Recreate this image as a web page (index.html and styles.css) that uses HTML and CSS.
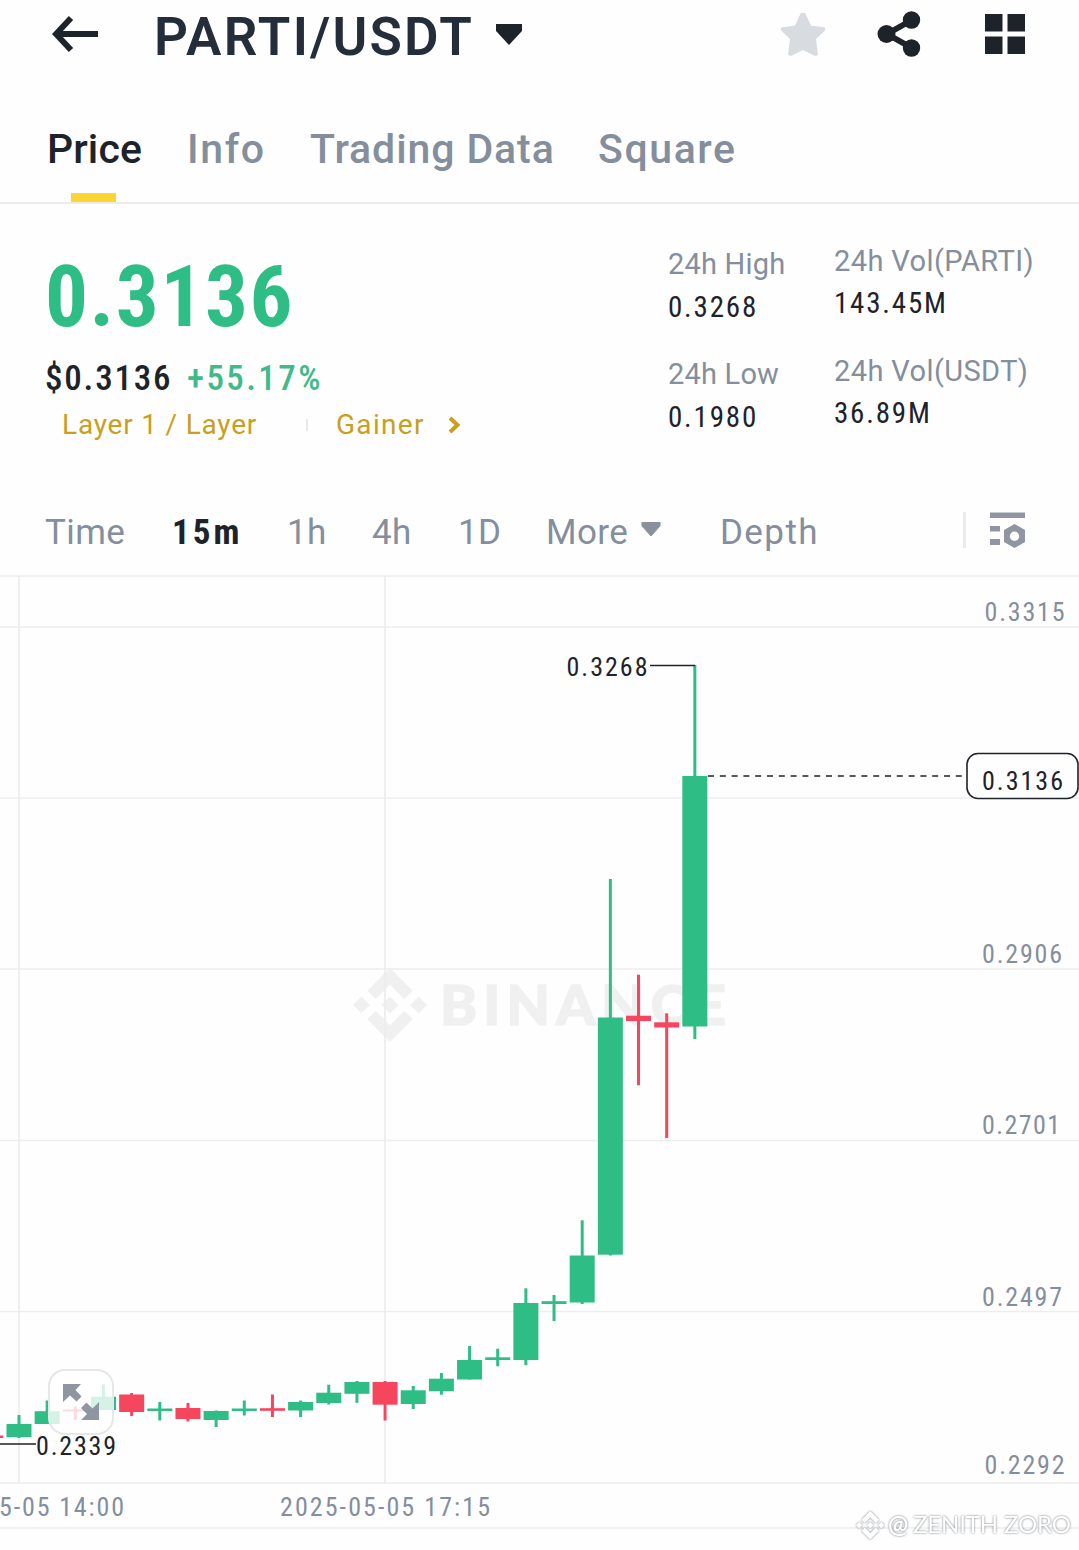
FILE: index.html
```html
<!DOCTYPE html>
<html lang="en">
<head>
    <meta charset="UTF-8">
    <meta name="viewport" content="width=device-width, initial-scale=1.0">
    <title>PARTI/USDT</title>
    <link rel="stylesheet" href="styles.css">
</head>
<body>
    <header class="header">
        <svg class="back" width="48" height="38" viewBox="0 0 48 38">
            <path d="M19 3 L4 19 L19 35 M4 19 H46" fill="none" stroke="#1e2329" stroke-width="6"/>
        </svg>
        <h1>PARTI/USDT</h1>
        <svg class="caret" width="28" height="22" viewBox="0 0 28 22">
            <path d="M1 0 H27 V7 L14 21 L1 7 Z" fill="#1e2329"/>
        </svg>
        <div class="actions">
            <svg width="46" height="46" viewBox="0 0 46 46">
                <path d="M20.8 2 H25.2 L31 14.5 L45 16.5 V19.5 L36 28 L38 44 L35 45 L23 39 L11 45 L8 44 L10 28 L1 19.5 V16.5 L15 14.5 Z" fill="#d8dce1"/>
            </svg>
            <svg width="46" height="46" viewBox="0 0 46 46">
                <path d="M35 9 L10 23 L35 37" fill="none" stroke="#1e2329" stroke-width="6"/>
                <circle cx="34.500" cy="9" r="8.7" fill="#1e2329"/>
                <circle cx="9.500" cy="23" r="9" fill="#1e2329"/>
                <circle cx="34.500" cy="37" r="8.7" fill="#1e2329"/>
            </svg>
            <svg width="40" height="40" viewBox="0 0 40 40">
                <path d="M0 0 H17.5 V17.5 H0 Z M22.5 0 H40 V17.5 H22.5 Z M0 22.5 H17.5 V40 H0 Z M22.5 22.5 H40 V40 H22.5 Z" fill="#1e2329"/>
            </svg>
        </div>
    </header>

    <nav class="tabs">
        <a class="tab active">Price</a>
        <a class="tab wide">Info</a>
        <a class="tab">Trading Data</a>
        <a class="tab wide">Square</a>
    </nav>

    <section class="summary">
        <div class="quote">
            <div class="last-price">0.3136</div>
            <div class="fiat">
                <span>$0.3136</span>
                <span class="change">+55.17%</span>
            </div>
            <div class="tags">
                <span class="tag">Layer 1 / Layer</span>
                <span class="tag-divider"></span>
                <span class="tag gainer">Gainer</span>
                <svg width="13" height="18" viewBox="0 0 13 18">
                    <path d="M2 2 L9.5 9 L2 16" fill="none" stroke="#c99f1e" stroke-width="4"/>
                </svg>
            </div>
        </div>
        <div class="stats">
            <div class="stat">
                <div class="stat-label">24h High</div>
                <div class="stat-value">0.3268</div>
            </div>
            <div class="stat">
                <div class="stat-label">24h Low</div>
                <div class="stat-value">0.1980</div>
            </div>
        </div>
        <div class="stats volume">
            <div class="stat">
                <div class="stat-label">24h Vol(PARTI)</div>
                <div class="stat-value">143.45M</div>
            </div>
            <div class="stat">
                <div class="stat-label">24h Vol(USDT)</div>
                <div class="stat-value">36.89M</div>
            </div>
        </div>
    </section>

    <div class="intervals">
        <span>Time</span>
        <span class="selected">15m</span>
        <span>1h</span>
        <span>4h</span>
        <span>1D</span>
        <span class="more">More
            <svg width="20" height="14" viewBox="0 0 20 14">
                <path d="M1 0 H19 V4 L10 14 L1 4 Z" fill="#8a919c" stroke="#8a919c"/>
            </svg>
        </span>
        <span class="depth">Depth</span>
        <svg class="settings" width="36" height="36" viewBox="0 0 36 36">
            <path d="M0 0.5 H35 V6 H0 Z M0 14 H10 V19.5 H0 Z M0 27 H10 V33 H0 Z" fill="#8f96a1"/>
            <path d="M24.5 12 L35 18 V30 L24.5 36 L14 30 V18 Z M24.5 19.5 A4.7 4.7 0 1 0 24.5 28.9 A4.7 4.7 0 1 0 24.5 19.5 Z" fill="#8f96a1" fill-rule="evenodd"/>
        </svg>
    </div>

    <main class="chart-wrap">
        <svg class="chart" width="1079" height="975" viewBox="0 575 1079 975">
            <defs>
                <g id="logo">
                    <path d="M38.73,53.2l24.59-24.58,24.6,24.6,14.3-14.31L63.32,0,24.42,38.9Z M0,63.31L14.3,49l14.31,14.31L14.31,77.61Z M38.73,73.41,63.32,98l24.6-24.6,14.31,14.29-38.9,38.91-38.91-38.88Z M98,63.31l14.31-14.31,14.3,14.31-14.31,14.31Z M77.83,63.3L63.32,48.78,48.81,63.28l14.5,14.5Z"/>
                </g>
            </defs>

            <g class="watermark">
                <use href="#logo" transform="translate(353 968) scale(0.584)"/>
                <text x="440" y="1025" textLength="286">BINANCE</text>
            </g>

            <g class="grid">
                <path d="M0 576H1079 M0 627H1079 M0 798H1079 M0 969H1079 M0 1140.500H1079 M0 1311.500H1079 M0 1483H1079 M0 1528H1079 M19 576V1483 M385 576V1483"/>
            </g>

            <g id="candles"></g>

            <g class="axis">
                <text x="984.500" y="621" textLength="80">0.3315</text>
                <text x="982" y="963" textLength="80">0.2906</text>
                <text x="982" y="1134" textLength="78">0.2701</text>
                <text x="982" y="1306" textLength="80">0.2497</text>
                <text x="984.500" y="1474" textLength="80">0.2292</text>
                <text x="-1" y="1516" textLength="125">5-05 14:00</text>
                <text x="280" y="1516" textLength="210">2025-05-05 17:15</text>
            </g>

            <g class="marks">
                <path d="M650 665.500H695 M0 1444H36"/>
                <path d="M708 776H966" stroke-dasharray="6 5.800"/>
                <rect x="967" y="753.500" width="111" height="45" rx="11"/>
                <text x="566.500" y="676" textLength="81">0.3268</text>
                <text x="982" y="790" textLength="81">0.3136</text>
                <text x="36" y="1455" textLength="80">0.2339</text>
            </g>

            <g class="signature">
                <use href="#logo" transform="translate(856 1511) scale(0.225)"/>
                <text class="at" x="888" y="1533" textLength="22">@</text>
                <text x="913" y="1533" textLength="158">ZENITH ZORO</text>
            </g>
        </svg>
        <button class="expand">
            <svg width="38" height="38" viewBox="0 0 38 38">
                <path d="M1 1 H19 L13.500 7 L19.500 13.500 L14.500 18.500 L8 12.500 L1 19 Z M37 37 H19 L25 31 L19 25 L24.500 19.500 L30.500 25.500 L37 19 Z" fill="#8f96a1"/>
            </svg>
        </button>
    </main>

    <script>
        // [body top, body bottom, wick top, wick bottom, direction]
        const candles = [
            [1435.5, 1438, 1435.5, 1438, 'down'],
            [1424, 1437.2, 1415, 1438, 'up'],
            [1411.2, 1424, 1400.5, 1424, 'up'],
            [1409.5, 1411.5, 1406.5, 1420, 'down'],
            [1396.7, 1410, 1384.5, 1410, 'up'],
            [1394.5, 1412, 1393, 1416, 'down'],
            [1408.5, 1411, 1402, 1420.5, 'up'],
            [1408, 1419, 1403, 1421.5, 'down'],
            [1411, 1420, 1410.5, 1427, 'up'],
            [1408.5, 1411, 1400.5, 1415.5, 'up'],
            [1408.2, 1410.8, 1394.5, 1417, 'down'],
            [1402, 1410.5, 1400.5, 1417, 'up'],
            [1392.7, 1403, 1384.7, 1404.5, 'up'],
            [1382, 1393.8, 1381, 1402.8, 'up'],
            [1382, 1404.7, 1381, 1420.5, 'down'],
            [1390.3, 1404, 1386, 1409, 'up'],
            [1378.7, 1391.2, 1373, 1394.7, 'up'],
            [1360, 1379.5, 1346, 1379.5, 'up'],
            [1357.3, 1360, 1348.7, 1366.3, 'up'],
            [1303, 1360, 1288.3, 1365.2, 'up'],
            [1301.2, 1304, 1295, 1321, 'up'],
            [1255.5, 1302.5, 1220.3, 1304, 'up'],
            [1017.5, 1254.7, 879, 1255.5, 'up'],
            [1015.7, 1021, 974.7, 1085.3, 'down'],
            [1022.3, 1027.5, 1013.3, 1138, 'down'],
            [776, 1026.5, 665, 1039, 'up']
        ];
        const step = 28.16;

        document.getElementById('candles').innerHTML = candles.map(([top, bottom, high, low, dir], i) => {
            const x = 19 + (i - 1) * step;
            return `<g class="${dir}">
                <rect x="${x - 1.5}" y="${high}" width="3" height="${low - high}"/>
                <rect x="${x - 12.5}" y="${top}" width="25" height="${bottom - top}"/>
            </g>`;
        }).join('');
    </script>
</body>
</html>
```
FILE: styles.css
```css
* {
    margin: 0;
    padding: 0;
    box-sizing: border-box;
}

body {
    width: 1079px;
    height: 1550px;
    overflow: hidden;
    font-family: Roboto, "Liberation Sans", sans-serif;
    background: #fefefe;
    color: #1e2329;
}

svg {
    display: block;
    flex: none;
}

/* header */
.header {
    display: flex;
    align-items: center;
    height: 72px;
    padding: 0 54px 0 52px;
}

.back {
    margin-top: -4px;
}

h1 {
    width: 340px;
    margin-left: 54px;
    padding-top: 1px;
    font-size: 53px;
    line-height: 72px;
    font-weight: 600;
    letter-spacing: 2.2px;
    color: #242d3a;
}

.caret {
    margin-left: 1px;
    margin-top: -3px;
}

.actions {
    display: flex;
    align-items: center;
    margin-left: auto;
    margin-top: -4px;
}

.actions svg:nth-child(2) {
    margin-left: 51px;
    margin-right: 62px;
}

/* tabs */
.tabs {
    display: grid;
    grid-template-columns: 140px 123px 288px 160px;
    height: 132px;
    padding: 52px 0 0 47px;
    border-bottom: 2px solid #eaebed;
}

.tab {
    position: relative;
    font-size: 41px;
    line-height: 50px;
    font-weight: 500;
    letter-spacing: 0.9px;
    white-space: nowrap;
    color: #848e9c;
}

.tab.wide {
    letter-spacing: 1.6px;
}

.tab.active {
    color: #1e2329;
    letter-spacing: 0.1px;
}

.tab.active::after {
    content: "";
    position: absolute;
    left: 24px;
    bottom: 0;
    width: 45px;
    height: 9px;
    background: #fcd535;
}

/* price summary */
.summary {
    display: grid;
    grid-template-columns: 623px 166px 1fr;
    height: 284px;
    padding: 43px 0 0 45px;
}

.last-price {
    font-size: 85px;
    line-height: 100px;
    font-weight: 700;
    font-stretch: 85%;
    letter-spacing: 1.6px;
    color: #2ebd85;
}

.fiat {
    display: flex;
    margin-top: 11px;
    font-size: 35px;
    line-height: 42px;
    font-weight: 500;
    font-stretch: 85%;
    letter-spacing: 1.8px;
}

.fiat span:first-child {
    width: 142px;
}

.fiat .change {
    letter-spacing: 2.4px;
    color: #3fba88;
}

.tags {
    display: flex;
    align-items: center;
    margin-top: 8px;
    padding-left: 17px;
    color: #c99f1e;
}

.tag {
    width: 244px;
    font-size: 28px;
    line-height: 34px;
    letter-spacing: 0.8px;
}

.tag.gainer {
    width: 112px;
    letter-spacing: 1.3px;
}

.tag-divider {
    width: 2px;
    height: 12px;
    margin-right: 28px;
    background: #e6e8ea;
}

.stat {
    height: 110px;
    padding-top: 1px;
    white-space: nowrap;
}

.stat-label {
    font-size: 29px;
    line-height: 33px;
    letter-spacing: 0.2px;
    color: #848e9c;
}

.stat-value {
    margin-top: 10px;
    font-size: 29px;
    line-height: 33px;
    font-stretch: 85%;
    letter-spacing: 1.8px;
}

.volume {
    margin-top: -3px;
}

.volume .stat-label {
    letter-spacing: 0.4px;
}

.volume .stat-value {
    margin-top: 9px;
}

/* interval bar */
.intervals {
    display: grid;
    grid-template-columns: 127px 115px 85px 86px 88px 174px 243px 1fr;
    align-items: center;
    height: 87px;
    padding: 1px 0 0 45px;
    font-size: 35px;
    letter-spacing: 0.4px;
    color: #848e9c;
}

.intervals .selected {
    font-weight: 700;
    font-stretch: 85%;
    letter-spacing: 3px;
    color: #1e2329;
}

.intervals .depth {
    letter-spacing: 1.4px;
}

.more {
    display: flex;
    align-items: center;
    gap: 13px;
}

.more svg {
    margin-top: -7px;
}

.settings {
    box-sizing: content-box;
    padding-left: 24px;
    border-left: 3px solid #eaebed;
    margin-top: -4px;
}

/* chart */
.chart-wrap {
    position: relative;
}

.chart {
    font-size: 26px;
    font-stretch: 85%;
}

.grid path {
    fill: none;
    stroke: #ededee;
    stroke-width: 1.7;
}

.watermark {
    fill: #f0f0f1;
}

.watermark text {
    font-family: Lato, sans-serif;
    font-size: 56px;
    font-weight: 900;
    font-stretch: 100%;
    stroke: #f0f0f1;
    stroke-width: 1.5;
}

.up {
    fill: #2ebd85;
}

.down {
    fill: #f6465d;
}

.axis {
    fill: #848e9c;
}

.marks path,
.marks rect {
    fill: none;
    stroke: #1e2329;
    stroke-width: 1.6;
}

.marks rect {
    fill: #fefefe;
}

.marks text {
    fill: #1e2329;
}

.signature {
    fill: #fff;
    filter: drop-shadow(0.5px 0.7px 1px rgba(60, 65, 75, 0.7));
}

.signature text {
    font-family: Lato, sans-serif;
    font-size: 24px;
    font-weight: 400;
}

.signature .at {
    font-weight: 700;
}

.expand {
    position: absolute;
    left: 48px;
    top: 794px;
    width: 66px;
    height: 66px;
    display: flex;
    align-items: center;
    justify-content: center;
    border: 2px solid #e6e7e9;
    border-radius: 17px;
    background: rgba(255, 255, 255, 0.8);
}
```
